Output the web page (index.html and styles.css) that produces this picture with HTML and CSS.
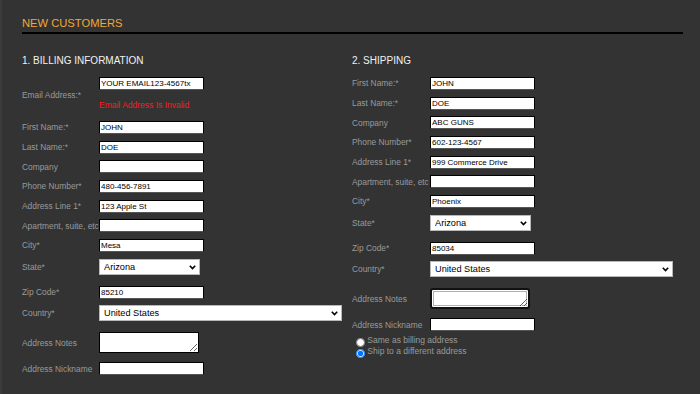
FILE: index.html
```html
<!DOCTYPE html>
<html>
<head>
<title>New Customers</title>
<meta name="viewport" content="width=device-width, initial-scale=1">
<link rel="stylesheet" href="styles.css">
</head>
<body>

<div class="page">
	<h1 class="page-title">NEW CUSTOMERS</h1>

	<div class="cols">
		<!-- billing -->
		<section class="col">
			<h2 class="col-title">1. BILLING INFORMATION</h2>

			<div class="row row-email">
				<label class="lbl">Email Address:*</label>
				<div class="fld">
					<input class="txt" type="text" value="YOUR EMAIL123-4567tx">
					<div class="err">Email Address Is Invalid</div>
				</div>
			</div>
			<div class="row"><label class="lbl">First Name:*</label><input class="txt" type="text" value="JOHN"></div>
			<div class="row"><label class="lbl">Last Name:*</label><input class="txt" type="text" value="DOE"></div>
			<div class="row"><label class="lbl">Company</label><input class="txt" type="text" value=""></div>
			<div class="row"><label class="lbl">Phone Number*</label><input class="txt" type="text" value="480-456-7891"></div>
			<div class="row"><label class="lbl">Address Line 1*</label><input class="txt" type="text" value="123 Apple St"></div>
			<div class="row"><label class="lbl">Apartment, suite, etc</label><input class="txt" type="text" value=""></div>
			<div class="row"><label class="lbl">City*</label><input class="txt" type="text" value="Mesa"></div>
			<div class="row row-sel">
				<label class="lbl">State*</label>
				<span class="sel">
					<select><option>Arizona</option></select>
					<svg class="chev" width="7" height="5" viewBox="0 0 7 5"><path d="M0.8 0.8 L3.5 3.6 L6.2 0.8" fill="none" stroke="#000" stroke-width="1.6"/></svg>
				</span>
			</div>
			<div class="row"><label class="lbl">Zip Code*</label><input class="txt" type="text" value="85210"></div>
			<div class="row row-sel">
				<label class="lbl">Country*</label>
				<span class="sel sel-wide">
					<select><option>United States</option></select>
					<svg class="chev" width="7" height="5" viewBox="0 0 7 5"><path d="M0.8 0.8 L3.5 3.6 L6.2 0.8" fill="none" stroke="#000" stroke-width="1.6"/></svg>
				</span>
			</div>
			<div class="row row-notes"><label class="lbl">Address Notes</label><textarea class="notes"></textarea></div>
			<div class="row"><label class="lbl">Address Nickname</label><input class="txt" type="text" value=""></div>
		</section>

		<!-- shipping -->
		<section class="col col-ship">
			<h2 class="col-title">2. SHIPPING</h2>

			<div class="row"><label class="lbl">First Name:*</label><input class="txt" type="text" value="JOHN"></div>
			<div class="row"><label class="lbl">Last Name:*</label><input class="txt" type="text" value="DOE"></div>
			<div class="row"><label class="lbl">Company</label><input class="txt" type="text" value="ABC GUNS"></div>
			<div class="row"><label class="lbl">Phone Number*</label><input class="txt" type="text" value="602-123-4567"></div>
			<div class="row"><label class="lbl">Address Line 1*</label><input class="txt" type="text" value="999 Commerce Drive"></div>
			<div class="row"><label class="lbl">Apartment, suite, etc</label><input class="txt" type="text" value=""></div>
			<div class="row"><label class="lbl">City*</label><input class="txt" type="text" value="Phoenix"></div>
			<div class="row row-sel">
				<label class="lbl">State*</label>
				<span class="sel">
					<select><option>Arizona</option></select>
					<svg class="chev" width="7" height="5" viewBox="0 0 7 5"><path d="M0.8 0.8 L3.5 3.6 L6.2 0.8" fill="none" stroke="#000" stroke-width="1.6"/></svg>
				</span>
			</div>
			<div class="row"><label class="lbl">Zip Code*</label><input class="txt" type="text" value="85034"></div>
			<div class="row row-sel">
				<label class="lbl">Country*</label>
				<span class="sel sel-wide">
					<select><option>United States</option></select>
					<svg class="chev" width="7" height="5" viewBox="0 0 7 5"><path d="M0.8 0.8 L3.5 3.6 L6.2 0.8" fill="none" stroke="#000" stroke-width="1.6"/></svg>
				</span>
			</div>
			<div class="row row-notes"><label class="lbl">Address Notes</label><textarea class="notes notes-focus"></textarea></div>
			<div class="row row-last"><label class="lbl">Address Nickname</label><input class="txt" type="text" value=""></div>

			<div class="radios">
				<label class="radio-row"><input type="radio" name="ship"> Same as billing address</label>
				<label class="radio-row"><input type="radio" name="ship" checked> Ship to a different address</label>
			</div>
		</section>
	</div>
</div>

</body>
</html>
```

FILE: styles.css
```css
html, body {
	margin: 0;
	height: 100%;
}
body {
	background-color: #333;
	border-left: 2px solid #3b3b3b;
	box-sizing: border-box;
	font-family: "Liberation Sans", Arial, sans-serif;
	color: #999;
}

.page {
	padding: 16px 17px 0 20px;
}

.page-title {
	margin: 0;
	font-size: 11.2px;
	line-height: 14px;
	font-weight: normal;
	color: #f0a838;
	padding-bottom: 2px;
	border-bottom: 2px solid #000;
}

.cols {
	display: grid;
	grid-template-columns: 330px 1fr;
}

.col-title {
	margin: 21.2px 0 9.8px;
	font-size: 10px;
	line-height: 12px;
	font-weight: normal;
	color: #f2f2f2;
}

.row {
	display: flex;
	align-items: center;
	margin-bottom: 6.67px;
}
.row-email {
	margin-bottom: 11px;
}
.row-email .lbl {
	padding-top: 4px;
}
.row-sel {
	margin-bottom: 11px;
}
.row-notes {
	margin-bottom: 9px;
}
.row-last {
	margin-bottom: 4px;
}

.lbl {
	flex: none;
	width: 77px;
	font-size: 8.4px;
	line-height: 10px;
	white-space: nowrap;
	color: #9a9a9a;
}
.col-ship .lbl {
	width: 78px;
}

.txt {
	display: block;
	box-sizing: border-box;
	width: 105px;
	height: 13px;
	margin: 0;
	padding: 0 1px;
	border: 1px solid #000;
	border-bottom-color: #555;
	background: #fff;
	font-family: "Liberation Sans", Arial, sans-serif;
	font-size: 8px;
	color: #000;
	outline: none;
}

.err {
	margin-top: 10px;
	font-size: 8.5px;
	line-height: 10px;
	color: #ff1a1a;
}

/* select with drawn chevron */
.sel {
	position: relative;
	display: block;
	width: 101px;
	height: 16px;
}
.sel-wide {
	width: 243px;
}
.sel select {
	-webkit-appearance: none;
	appearance: none;
	display: block;
	box-sizing: border-box;
	width: 100%;
	height: 16px;
	margin: 0;
	padding: 0 12px 0 4px;
	border: 1px solid #b8b8b8;
	border-radius: 0;
	background: #fff;
	font-family: "Liberation Sans", Arial, sans-serif;
	font-size: 9.2px;
	color: #000;
}
.chev {
	position: absolute;
	right: 4px;
	top: 6px;
}

.notes {
	display: block;
	box-sizing: border-box;
	width: 100px;
	height: 21px;
	margin: 0;
	padding: 0;
	border: 1px solid #000;
	background: #fff;
	resize: both;
	outline: none;
}
.notes-focus {
	border: 2px solid #111;
	border-radius: 3px;
	box-shadow: inset 0 0 0 1px #fff, inset 0 0 0 2px #b0b0b0;
}

.radios {
	padding-left: 4px;
}
.radio-row {
	display: flex;
	align-items: flex-start;
	height: 11px;
	font-size: 8.5px;
	line-height: 11px;
	color: #9a9a9a;
	white-space: pre;
}
.radio-row input {
	width: 9px;
	height: 9px;
	margin: 2.5px 0 0 0;
}
```
